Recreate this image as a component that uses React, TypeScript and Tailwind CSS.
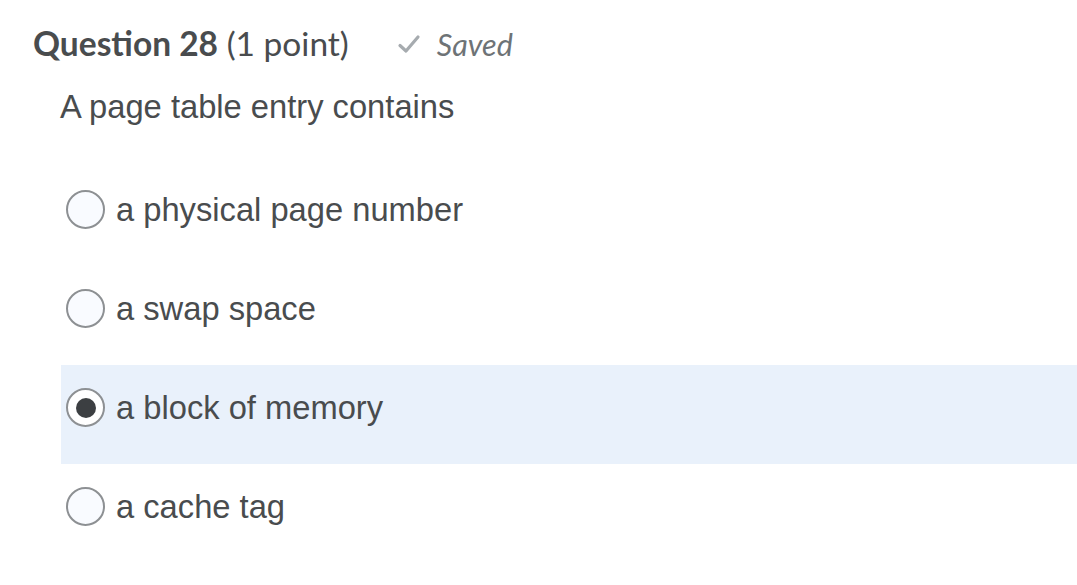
import React from "react";

const options = [
  { label: "a physical page number", selected: false },
  { label: "a swap space", selected: false },
  { label: "a block of memory", selected: true },
  { label: "a cache tag", selected: false },
];

function Radio({ checked }: { checked: boolean }) {
  return (
    <span
      className={
        "flex h-[39px] w-[39px] shrink-0 items-center justify-center rounded-full border-2 border-[#8d9093] " +
        (checked ? "bg-white" : "bg-[#f9fbff]")
      }
    >
      {checked && <span className="h-[20px] w-[20px] rounded-full bg-[#3c3f42]" />}
    </span>
  );
}

export default function App() {
  return (
    <div className="h-[585px] w-[1077px] overflow-hidden bg-white text-[#494c4e]">
      <div className="flex items-baseline pl-[33px] pt-[22px] font-['Lato',sans-serif] leading-[42px]">
        <h2 className="text-[33.5px]">
          <span className="font-bold">Question 28</span>
          <span className="font-normal"> (1 point)</span>
        </h2>
        <span className="ml-[48px] flex items-baseline text-[#6e7376]">
          <svg
            viewBox="0 0 24 24"
            className="mr-[16px] h-[24px] w-[24px] self-center text-[#a6abaf]"
            fill="none"
            stroke="currentColor"
            strokeWidth="3.2"
            strokeLinecap="round"
            strokeLinejoin="round"
          >
            <path d="M3 13.5l6 5.5L21 5" />
          </svg>
          <span className="text-[30.5px] italic">Saved</span>
        </span>
      </div>

      <p className="mt-[22px] pl-[60px] font-['Liberation_Sans',Arial,sans-serif] text-[32.7px] leading-[40px]">
        A page table entry contains
      </p>

      <div className="mt-[40px] font-['Liberation_Sans',Arial,sans-serif]">
        {options.map((o) => (
          <label
            key={o.label}
            className={
              "ml-[61px] flex h-[99px] items-start pl-[5px] pt-[23px] " +
              (o.selected ? "bg-[#e9f1fb]" : "")
            }
          >
            <Radio checked={o.selected} />
            <span className="ml-[11px] text-[32.7px] leading-[39px]">{o.label}</span>
          </label>
        ))}
      </div>
    </div>
  );
}
